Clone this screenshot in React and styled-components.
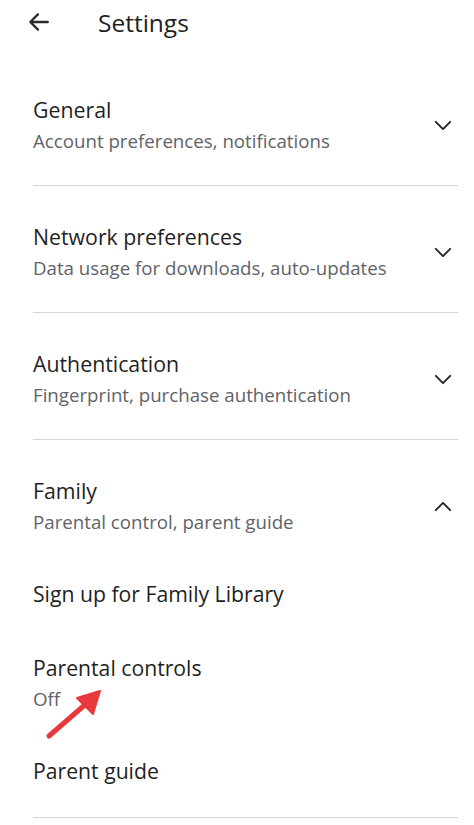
import React from "react";
import styled, { createGlobalStyle } from "styled-components";

const sections = [
  { title: "General", sub: "Account preferences, notifications" },
  { title: "Network preferences", sub: "Data usage for downloads, auto-updates" },
  { title: "Authentication", sub: "Fingerprint, purchase authentication" },
];

function Chevron({ up }) {
  return (
    <ChevronIcon viewBox="0 0 20 12" $up={up}>
      <path d="M2 2 L10 10 L18 2" fill="none" stroke="#2b2b2b" strokeWidth="2.2" strokeLinecap="round" strokeLinejoin="round" />
    </ChevronIcon>
  );
}

function App() {
  return (
    <Page>
      <GlobalStyle />
      <Header>
        <BackIcon viewBox="0 0 24 24">
          <path d="M20 12H5 M11 5 L4 12 L11 19" fill="none" stroke="#2b2b2b" strokeWidth="2.2" strokeLinecap="round" strokeLinejoin="round" />
        </BackIcon>
        <HeaderTitle>Settings</HeaderTitle>
      </Header>
      <List>
        {sections.map((s) => (
          <Section key={s.title}>
            <SectionHead>
              <div>
                <Title>{s.title}</Title>
                <Sub>{s.sub}</Sub>
              </div>
              <Chevron />
            </SectionHead>
          </Section>
        ))}
        <Section>
          <SectionHead>
            <div>
              <Title>Family</Title>
              <Sub>Parental control, parent guide</Sub>
            </div>
            <Chevron up />
          </SectionHead>
          <Item>
            <ItemTitle>Sign up for Family Library</ItemTitle>
          </Item>
          <Item $gap={46}>
            <ItemTitle>Parental controls</ItemTitle>
            <Sub $tight>Off</Sub>
            <Arrow viewBox="0 0 60 52">
              <path d="M4 48 L42 15" stroke="#e8393c" strokeWidth="5" strokeLinecap="round" />
              <path d="M55 3 L32 10 L48 26 Z" fill="#e8393c" stroke="#e8393c" strokeWidth="2" strokeLinejoin="round" />
            </Arrow>
          </Item>
          <Item $gap={46}>
            <ItemTitle>Parent guide</ItemTitle>
          </Item>
        </Section>
      </List>
    </Page>
  );
}

const GlobalStyle = createGlobalStyle`
  body {
    margin: 0;
    background: #fff;
    font-family: "Open Sans", Roboto, sans-serif;
  }
`;

const Page = styled.div`
  width: 474px;
  height: 825px;
  overflow: hidden;
  background: #fff;
  color: #1f1f1f;
`;

const Header = styled.div`
  height: 44px;
  display: flex;
  align-items: center;
  padding-left: 26px;
`;

const BackIcon = styled.svg`
  width: 26px;
  height: 26px;
`;

const HeaderTitle = styled.div`
  margin-left: 46px;
  font-size: 24.5px;
  color: #1f1f1f;
`;

const List = styled.div`
  padding: 15px 16px 0 33px;
`;

const Section = styled.div`
  padding: 38px 0 32px;
  border-bottom: 1.5px solid #d6d6d6;
`;

const SectionHead = styled.div`
  display: flex;
  align-items: center;
  justify-content: space-between;
  padding-right: 6px;
`;

const Title = styled.div`
  font-size: 21.3px;
  line-height: 26px;
  color: #1f1f1f;
`;

const Sub = styled.div`
  font-size: 18.7px;
  line-height: 24px;
  margin-top: ${({ $tight }) => ($tight ? "5px" : "6px")};
  color: #5f6368;
`;

const ChevronIcon = styled.svg`
  width: 18px;
  height: 11px;
  transform: ${({ $up }) => ($up ? "rotate(180deg)" : "none")};
`;

const Item = styled.div`
  position: relative;
  margin-top: ${({ $gap }) => ($gap || 46)}px;
`;

const ItemTitle = styled.div`
  font-size: 21.2px;
  line-height: 28px;
  color: #1f1f1f;
`;

const Arrow = styled.svg`
  position: absolute;
  left: 12px;
  top: 34px;
  width: 60px;
  height: 52px;
`;

export default App;
